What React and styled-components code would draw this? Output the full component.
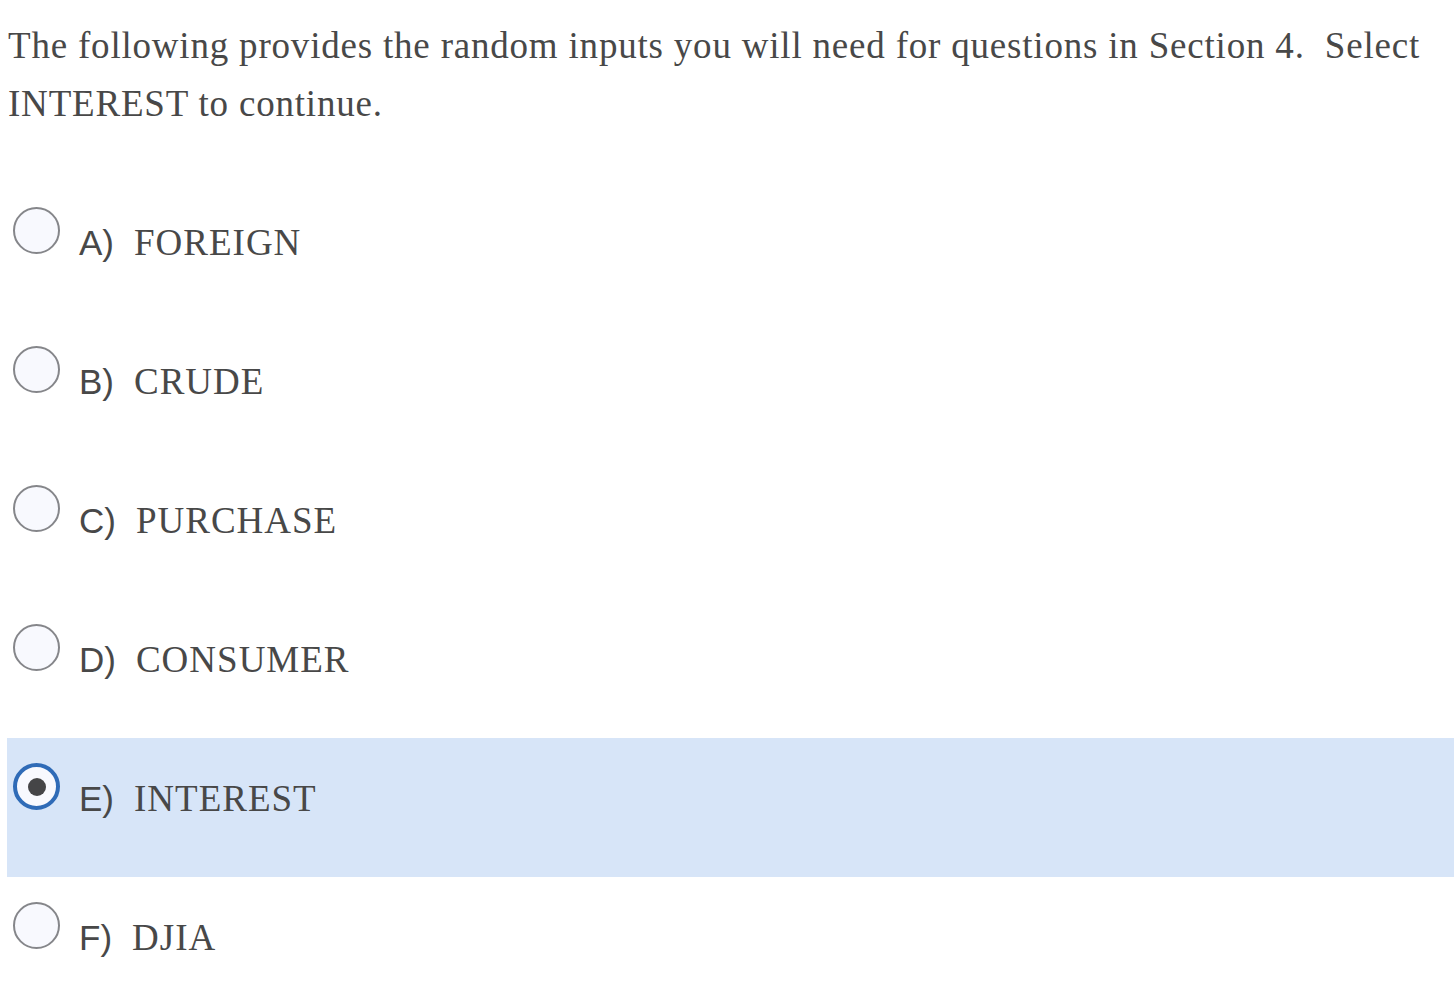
import React from "react";
import styled, { createGlobalStyle } from "styled-components";

const Global = createGlobalStyle`
  html, body { margin: 0; padding: 0; background: #ffffff; }
  body { font-family: "Liberation Serif", "Times New Roman", serif; color: #484848; }
`;

const Page = styled.div`
  padding: 17px 0 0 7px;
`;

const Prompt = styled.p`
  margin: 0 0 49px 1px;
  font-family: "Liberation Serif", "Times New Roman", serif;
  font-size: 37px;
  letter-spacing: 0.8px;
  line-height: 58px;
  color: #484848;
  max-width: 1440px;
`;

const List = styled.div`
  display: flex;
  flex-direction: column;
`;

const Row = styled.label`
  display: flex;
  align-items: flex-start;
  height: 139px;
  box-sizing: border-box;
  padding: 25px 0 0 6px;
  background: ${(p) => (p.$selected ? "#d7e5f8" : "transparent")};
  cursor: pointer;
`;

const Radio = styled.span`
  flex: none;
  width: 47px;
  height: 47px;
  box-sizing: border-box;
  border-radius: 50%;
  background: #f8f9fe;
  border: ${(p) => (p.$selected ? "4px solid #2f6bb7" : "2px solid #85868a")};
  display: flex;
  align-items: center;
  justify-content: center;
`;

const Dot = styled.span`
  width: 18px;
  height: 18px;
  border-radius: 50%;
  background: #454547;
`;

const Label = styled.span`
  display: flex;
  align-items: baseline;
  margin: 11px 0 0 19px;
  line-height: 50px;
`;

const Letter = styled.span`
  font-family: "Liberation Sans", Arial, sans-serif;
  font-size: 35px;
  color: #484848;
  margin-right: 20px;
`;

const Word = styled.span`
  font-family: "Liberation Serif", "Times New Roman", serif;
  font-size: 37px;
  letter-spacing: 1px;
  color: #484848;
`;

const options = [
  ["A)", "FOREIGN"],
  ["B)", "CRUDE"],
  ["C)", "PURCHASE"],
  ["D)", "CONSUMER"],
  ["E)", "INTEREST"],
  ["F)", "DJIA"],
];

export default function App() {
  const selected = 4;
  return (
    <Page>
      <Global />
      <Prompt>
        The following provides the random inputs you will need for questions in Section 4.&nbsp; Select INTEREST to continue.
      </Prompt>
      <List>
        {options.map(([l, w], i) => (
          <Row key={l} $selected={i === selected}>
            <Radio $selected={i === selected}>{i === selected && <Dot />}</Radio>
            <Label>
              <Letter>{l}</Letter>
              <Word>{w}</Word>
            </Label>
          </Row>
        ))}
      </List>
    </Page>
  );
}
